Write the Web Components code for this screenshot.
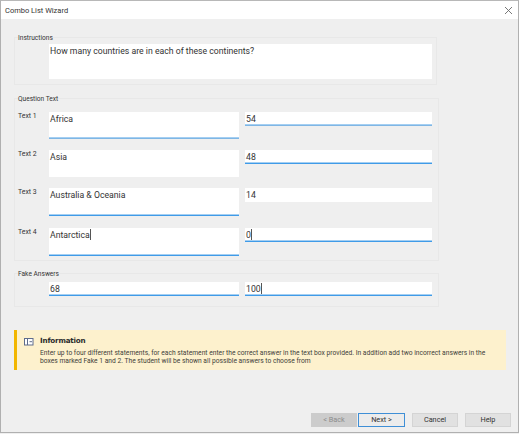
<!DOCTYPE html>
<html lang="en">
<head>
<meta charset="UTF-8">
<title>Combo List Wizard</title>
<style>
    html, body { margin: 0; padding: 0; background: #efefef; }
    body { font-family: Roboto, "Open Sans", sans-serif; color: #3c3c3c; }
</style>
<script>
    function makeEl(name, html) {
        customElements.define(name, class extends HTMLElement {
            connectedCallback() {
                if (this.shadowRoot) return
                this.attachShadow({ mode: "open" })
                this.shadowRoot.innerHTML = html(this)
            }
        })
    }

    makeEl("wizard-window", () => `
        <style>
            :host { display: flex; flex-direction: column; box-sizing: border-box; width: 519px; height: 433px;
                border: 1px solid #b0b0b0; border-top-color: #b8b8b8; background: #efefef; }
            .title { display: flex; align-items: center; justify-content: space-between; height: 18px; background: #fff;
                padding: 0 5px 0 4px; font-size: 7.5px; color: #333; flex: none; }
            svg { display: block; }
            .body { flex: 1; display: flex; flex-direction: column; padding: 14px 0 0 13px; min-height: 0; }
        </style>
        <div class="title"><span>Combo List Wizard</span>
            <svg width="9" height="9" viewBox="0 0 9 9"><path d="M1 1 L8 8 M8 1 L1 8" stroke="#6a6a6a" stroke-width="0.9" fill="none"/></svg>
        </div>
        <div class="body"><slot></slot></div>`)

    makeEl("wizard-group", el => `
        <style>
            :host { display: block; width: ${el.getAttribute("width")}px; margin-bottom: ${el.getAttribute("after") || 0}px; }
            fieldset { margin: 0; padding: 0; border: 1px solid #e8e8e8; }
            legend { margin-left: 3px; padding: 0; font-size: 6.6px; line-height: 8px; color: #333; position: relative; top: .5px; }
            .in { padding: ${el.getAttribute("pad")}; }
        </style>
        <fieldset><legend>${el.getAttribute("legend")}</legend><div class="in"><slot></slot></div></fieldset>`)

    makeEl("wizard-row", el => `
        <style>
            :host { display: grid; grid-template-columns: 31px 190px 193px; align-items: start;
                margin-bottom: ${el.getAttribute("after") || 0}px; }
            .lab { font-size: 6.9px; line-height: 9px; color: #333; }
            ::slotted(wizard-field:last-child) { margin-left: 6px; }
        </style>
        <div class="lab">${el.getAttribute("label") || ""}</div><slot></slot>`)

    makeEl("wizard-field", el => {
        const line = el.getAttribute("line")
        const caret = el.hasAttribute("caret") ? `<i></i>` : ""
        return `
        <style>
            :host { display: block; box-sizing: border-box; height: ${el.getAttribute("h") || 14}px; background: #fff;
                border-bottom: 1px solid ${line || "#fff"}; box-shadow: ${line ? "inset 0 -1px #a5cff2" : "none"};
                padding: 0 1px; font-size: 8.7px; line-height: 14px; color: #333; }
            i { display: inline-block; width: 1px; height: 11px; background: #555; vertical-align: -2px; }
        </style>
        <slot></slot>${caret}`
    })

    makeEl("info-box", () => `
        <style>
            :host { display: grid; grid-template-columns: 16px 1fr; box-sizing: border-box; width: 492px; height: 40px;
                margin-top: 23px; background: #fdf1cd; border-left: 3px solid #f2b600; padding: 6px 16px 0 7px; }
            svg { display: block; margin-top: 1px; }
            b { display: block; font-size: 7.2px; line-height: 9px; color: #2c2c2c; font-family: "DejaVu Sans", sans-serif; letter-spacing: -.2px; }
            p { margin: 4px 0 0; font-size: 6.7px; line-height: 8px; color: #3f3f3a; }
        </style>
        <svg width="10" height="9" viewBox="0 0 10 9"><rect x=".5" y="1.5" width="8.5" height="6.5" fill="#fff" stroke="#5e6c8c"/><path d="M3.5 1.5V8" stroke="#5e6c8c"/><path d="M5.5 4.7H8" stroke="#5e6c8c"/></svg>
        <div><b>Information</b><p><slot></slot></p></div>`)

    makeEl("wizard-button", el => `
        <style>
            :host { display: block; box-sizing: border-box; width: ${el.hasAttribute("default") ? 47 : 46}px; height: 14px; text-align: center;
                background: ${el.hasAttribute("disabled") ? "#cccccc" : el.hasAttribute("default") ? "#ececec" : "#e1e1e1"};
                border: 1px solid ${el.hasAttribute("default") ? "#3f8fd6" : el.hasAttribute("disabled") ? "#cccccc" : "#d4d4d4"};
                font-size: 7.3px; line-height: 12px; color: ${el.hasAttribute("disabled") ? "#8c8c8c" : "#333"}; }
        </style>
        <slot></slot>`)

    makeEl("button-bar", () => `
        <style>
            :host { display: flex; margin-top: auto; padding: 0 7px 5px 0; margin-left: -13px; justify-content: flex-end; }
            ::slotted(wizard-button:nth-child(2)) { margin-left: 1px; }
            ::slotted(wizard-button:nth-child(n+3)) { margin-left: 7px; }
        </style>
        <slot></slot>`)
</script>
</head>
<body>
<wizard-window>
    <wizard-group legend="Instructions" width="423" after="9" pad="3px 4px 5px 34px">
        <wizard-field h="35">How many countries are in each of these continents?</wizard-field>
    </wizard-group>
    <wizard-group legend="Question Text" width="425" after="8" pad="10px 4px 4px 3px">
        <wizard-row label="Text 1" after="11">
            <wizard-field h="27" line="#7fb6e4">Africa</wizard-field>
            <wizard-field line="#7fb6e4">54</wizard-field>
        </wizard-row>
        <wizard-row label="Text 2" after="11">
            <wizard-field h="27">Asia</wizard-field>
            <wizard-field line="#3f9be8">48</wizard-field>
        </wizard-row>
        <wizard-row label="Text 3" after="12">
            <wizard-field h="28" line="#3f9be8">Australia &amp; Oceania</wizard-field>
            <wizard-field>14</wizard-field>
        </wizard-row>
        <wizard-row label="Text 4">
            <wizard-field h="28" line="#3f9be8" caret>Antarctica</wizard-field>
            <wizard-field line="#3f9be8" caret>0</wizard-field>
        </wizard-row>
    </wizard-group>
    <wizard-group legend="Fake Answers" width="425" pad="5px 4px 10px 3px">
        <wizard-row>
            <wizard-field line="#3f9be8">68</wizard-field>
            <wizard-field line="#3f9be8" caret>100</wizard-field>
        </wizard-row>
    </wizard-group>
    <info-box>Enter up to four different statements, for each statement enter the correct answer in the text box provided. In addition add two incorrect answers in the boxes marked Fake 1 and 2. The student will be shown all possible answers to choose from</info-box>
    <button-bar>
        <wizard-button disabled>&lt; Back</wizard-button>
        <wizard-button default>Next &gt;</wizard-button>
        <wizard-button>Cancel</wizard-button>
        <wizard-button>Help</wizard-button>
    </button-bar>
</wizard-window>
</body>
</html>
